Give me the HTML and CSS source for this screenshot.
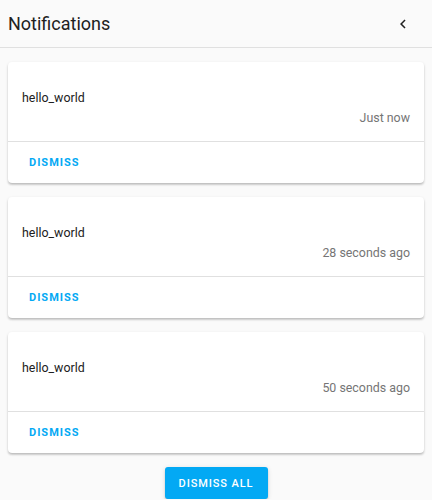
FILE: index.html
```html
<!DOCTYPE html>
<html lang="en">

<head>
    <meta charset="UTF-8">
    <meta name="viewport" content="width=device-width, initial-scale=1.0">
    <title>Notifications</title>
    <link rel="stylesheet" href="styles.css">
</head>

<body>
    <div class="header">
        <h1 class="title">Notifications</h1>
        <svg class="back-icon" viewBox="0 0 24 24" width="18" height="18">
            <path d="M15.41 7.41L14 6l-6 6 6 6 1.41-1.41L10.83 12z" />
        </svg>
    </div>

    <div class="list">
        <div class="card">
            <div class="card-body">
                <div class="message">hello_world</div>
                <div class="time">Just now</div>
            </div>
            <div class="card-actions">
                <button class="btn-flat">Dismiss</button>
            </div>
        </div>

        <div class="card">
            <div class="card-body">
                <div class="message">hello_world</div>
                <div class="time">28 seconds ago</div>
            </div>
            <div class="card-actions">
                <button class="btn-flat">Dismiss</button>
            </div>
        </div>

        <div class="card">
            <div class="card-body">
                <div class="message">hello_world</div>
                <div class="time">50 seconds ago</div>
            </div>
            <div class="card-actions">
                <button class="btn-flat">Dismiss</button>
            </div>
        </div>
    </div>

    <div class="footer">
        <button class="btn-raised">Dismiss all</button>
    </div>
</body>

</html>
```

FILE: styles.css
```css
* {
    margin: 0;
    padding: 0;
    box-sizing: border-box;
}

body {
    background: #fafafa;
    font-family: Roboto, "Liberation Sans", sans-serif;
    color: #212121;
    overflow: hidden;
}

.header {
    height: 48px;
    display: flex;
    align-items: center;
    justify-content: space-between;
    padding: 0 20px 0 8px;
    border-bottom: 1px solid #e0e0e0;
}

.title {
    font-size: 18px;
    font-weight: 400;
    line-height: 24px;
}

.back-icon {
    fill: #212121;
    margin-top: 1px;
}

.list {
    padding: 14px 8px 0;
    display: flex;
    flex-direction: column;
    gap: 14px;
}

.card {
    background: #fff;
    border-radius: 4px;
    box-shadow: 0 2px 2px 0 rgba(0, 0, 0, 0.14), 0 1px 3px 0 rgba(0, 0, 0, 0.12), 0 1px 1px -1px rgba(0, 0, 0, 0.2);
}

.card-body {
    padding: 26px 14px 13px;
    font-size: 12.4px;
    line-height: 20px;
}

.time {
    text-align: right;
    color: #757575;
}

.card-actions {
    border-top: 1px solid #e0e0e0;
    height: 42px;
    display: flex;
    align-items: center;
    padding: 0 8px;
}

.btn-flat {
    background: none;
    border: none;
    color: #03a9f4;
    font-family: inherit;
    font-size: 11px;
    font-weight: 700;
    letter-spacing: 1px;
    text-transform: uppercase;
    padding: 0 13px;
    height: 32px;
}

.footer {
    display: flex;
    justify-content: center;
    padding-top: 14px;
}

.btn-raised {
    background: #03a9f4;
    color: #fff;
    border: none;
    border-radius: 3px;
    height: 32px;
    width: 103px;
    font-family: inherit;
    font-size: 11px;
    font-weight: 500;
    letter-spacing: 0.9px;
    text-transform: uppercase;
    box-shadow: 0 2px 2px 0 rgba(0, 0, 0, 0.14), 0 1px 5px 0 rgba(0, 0, 0, 0.12), 0 3px 1px -2px rgba(0, 0, 0, 0.2);
}
```
